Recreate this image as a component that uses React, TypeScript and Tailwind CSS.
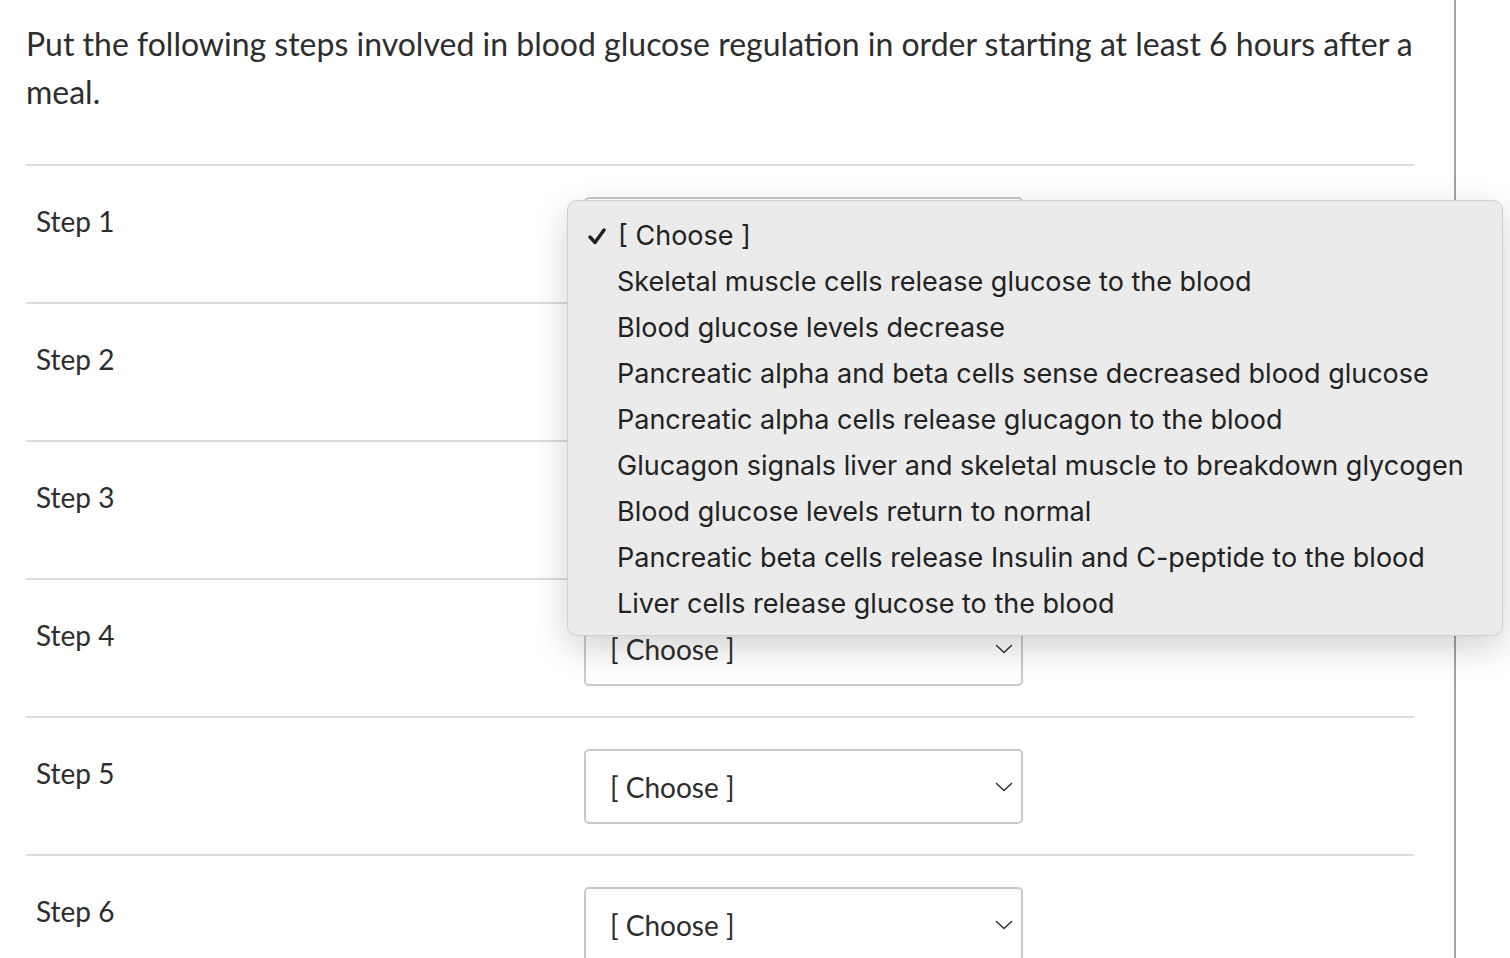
import React from "react";

const options = [
  "Skeletal muscle cells release glucose to the blood",
  "Blood glucose levels decrease",
  "Pancreatic alpha and beta cells sense decreased blood glucose",
  "Pancreatic alpha cells release glucagon to the blood",
  "Glucagon signals liver and skeletal muscle to breakdown glycogen",
  "Blood glucose levels return to normal",
  "Pancreatic beta cells release Insulin and C-peptide to the blood",
  "Liver cells release glucose to the blood",
];

function Chevron() {
  return (
    <svg width="18" height="12" viewBox="0 0 18 12" className="shrink-0">
      <polyline points="1.5,2.5 9,9.5 16.5,2.5" fill="none" stroke="#333" strokeWidth="1.6" strokeLinecap="round" strokeLinejoin="round" />
    </svg>
  );
}

function SelectBox() {
  return (
    <div className="mt-[31px] w-[439px] h-[75px] border-2 border-[#c9c9c9] rounded-[5px] bg-white flex items-center justify-between pl-[24px] pr-[8px]">
      <span className="text-[28px] text-[#2d2d2d]">[ Choose ]</span>
      <Chevron />
    </div>
  );
}

export default function App() {
  return (
    <div className="relative w-[1510px] h-[958px] overflow-hidden bg-white" style={{ fontFamily: "Lato, 'Open Sans', sans-serif" }}>
      <div className="w-[1456px] h-full border-r-2 border-[#a3a3a3] pl-[26px] pr-[40px]">
        <p className="pt-[20px] text-[32px] leading-[48px] text-[#2d2d2d]">
          Put the following steps involved in blood glucose regulation in order starting at least 6 hours after a meal.
        </p>
        <div className="mt-[48px]">
          {[1, 2, 3, 4, 5, 6].map((n) => (
            <div key={n} className="h-[138px] border-t-2 border-[#dcdcdc] flex">
              <div className="w-[558px] pl-[10px] pt-[37px] text-[28px] leading-[36px] text-[#2d2d2d]">Step {n}</div>
              <SelectBox />
            </div>
          ))}
        </div>
      </div>
      <div
        className="absolute left-[567px] top-[200px] w-[936px] h-[436px] rounded-[10px] bg-[#ebebeb] border border-[#cfcfcf] shadow-[0_12px_36px_rgba(0,0,0,0.18)] pt-[12px]"
        style={{ fontFamily: "Inter, 'Noto Sans', sans-serif" }}
      >
        <div className="h-[46px] flex items-center text-[27px] text-[#222]">
          <div className="w-[50px] flex justify-end pr-[12px]">
            <svg width="18" height="17" viewBox="0 0 18 17">
              <polyline points="2,9 7,14.5 16,2" fill="none" stroke="#222" strokeWidth="3.4" strokeLinecap="round" strokeLinejoin="round" />
            </svg>
          </div>
          <span>[ Choose ]</span>
        </div>
        {options.map((o) => (
          <div key={o} className="h-[46px] flex items-center pl-[49px] text-[27px] text-[#222]">
            {o}
          </div>
        ))}
      </div>
    </div>
  );
}
